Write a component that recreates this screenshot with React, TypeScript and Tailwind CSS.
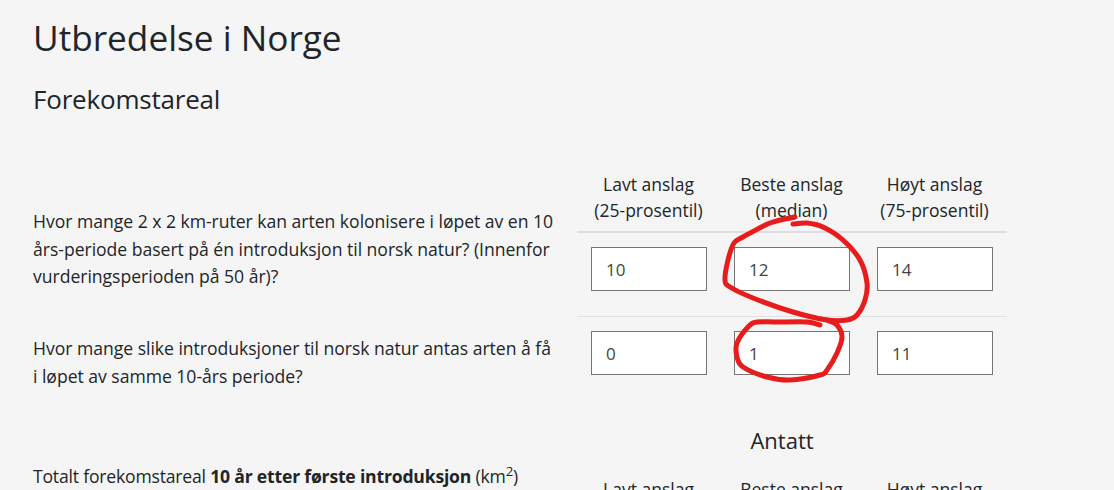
const font = "font-['Open_Sans','Noto_Sans',sans-serif]";

const columns = ['Lavt anslag', 'Beste anslag', 'Høyt anslag'];
const subLabels = ['(25-prosentil)', '(median)', '(75-prosentil)'];

const bigLoop: [number, number][] = [
  [795, 217], [770, 223], [743, 237], [734, 243], [728, 260], [725, 280], [730, 287], [753, 298], [793, 312],
  [827, 320], [847, 320], [857, 315], [865, 300], [867, 283], [860, 260], [843, 240], [823, 227], [807, 223], [793, 224],
];
const smallLoop: [number, number][] = [
  [820, 325], [807, 322], [777, 322], [757, 322], [748, 327], [737, 343], [737, 357], [743, 367], [767, 377],
  [790, 380], [820, 375], [827, 370], [837, 353], [842, 337], [837, 325], [827, 320],
];

// catmull-rom through the hand drawn points
function smooth(pts: [number, number][]) {
  let d = `M${pts[0][0]} ${pts[0][1]}`;
  for (let i = 0; i < pts.length - 1; i++) {
    const p0 = pts[Math.max(i - 1, 0)];
    const p1 = pts[i];
    const p2 = pts[i + 1];
    const p3 = pts[Math.min(i + 2, pts.length - 1)];
    const c1x = p1[0] + (p2[0] - p0[0]) / 6;
    const c1y = p1[1] + (p2[1] - p0[1]) / 6;
    const c2x = p2[0] - (p3[0] - p1[0]) / 6;
    const c2y = p2[1] - (p3[1] - p1[1]) / 6;
    d += `C${c1x} ${c1y} ${c2x} ${c2y} ${p2[0]} ${p2[1]}`;
  }
  return d;
}

function ValueInput({ value }: { value: string }) {
  return (
    <div className="flex h-[44px] w-[116px] items-center border border-[#767676] bg-white pl-[14px] pt-[2px] text-[17px] text-[#444]">
      {value}
    </div>
  );
}

function InputRow({ values, className }: { values: string[]; className: string }) {
  return (
    <div className={`flex w-[430px] gap-[27px] pl-[14px] ${className}`}>
      {values.map((v, i) => (
        <ValueInput key={i} value={v} />
      ))}
    </div>
  );
}

function Scribble() {
  return (
    <svg
      className="pointer-events-none absolute left-0 top-0"
      width="1114"
      height="490"
      fill="none"
      stroke="#e81c1c"
      strokeWidth="5"
      strokeLinecap="round"
      strokeLinejoin="round"
    >
      <path d={smooth(bigLoop)} />
      <path d={smooth(smallLoop)} />
    </svg>
  );
}

export default function App() {
  return (
    <div className={`relative h-[490px] w-[1114px] overflow-hidden bg-[#f5f5f5] text-[#212529] ${font}`}>
      <div className="pl-[33px] pt-[13px]">
        <h1 className="text-[35.2px] leading-[48px]">Utbredelse i Norge</h1>
        <h2 className="mt-[18px] text-[26px] leading-[40px] tracking-[-0.2px]">Forekomstareal</h2>

        <div className="mt-[52px] flex">
          <div className="w-[544px] shrink-0 pt-[37px] text-[17.6px] leading-[27.5px] tracking-[-0.03px]">
            Hvor mange 2 x 2 km-ruter kan arten kolonisere i løpet av en 10
            <br />
            års-periode basert på én introduksjon til norsk natur? (Innenfor
            <br />
            vurderingsperioden på 50 år)?
          </div>
          <div className="flex flex-col">
            <div className="flex w-[430px] border-b-2 border-[#dedede] pb-[8px] text-center text-[17.5px] leading-[26px]">
              {columns.map((c, i) => (
                <div key={c} className="w-[143px]">
                  {c}
                  <br />
                  {subLabels[i]}
                </div>
              ))}
            </div>
            <InputRow values={['10', '12', '14']} className="pb-[25px] pt-[14px]" />
          </div>
        </div>

        <div className="flex">
          <div className="w-[544px] shrink-0 pt-[19px] text-[17.6px] leading-[27.5px] tracking-[-0.03px]">
            Hvor mange slike introduksjoner til norsk natur antas arten å få
            <br />i løpet av samme 10-års periode?
          </div>
          <InputRow values={['0', '1', '11']} className="border-t border-[#e0e0e0] pt-[14px]" />
        </div>

        <div className="mt-[36px] flex">
          <div className="w-[544px] shrink-0 pt-[37px] text-[17.6px] leading-[27.5px] tracking-[-0.2px]">
            Totalt forekomstareal <b>10 år etter første introduksjon</b> (km<sup>2</sup>)
          </div>
          <div className="w-[430px]">
            <div className="pr-[20px] text-center text-[22px] leading-[28px]">Antatt</div>
            <div className="mt-[22px] flex text-center text-[17.5px] leading-[26px]">
              {columns.map((c) => (
                <div key={c} className="w-[143px]">
                  {c}
                </div>
              ))}
            </div>
          </div>
        </div>
      </div>
      <Scribble />
    </div>
  );
}
